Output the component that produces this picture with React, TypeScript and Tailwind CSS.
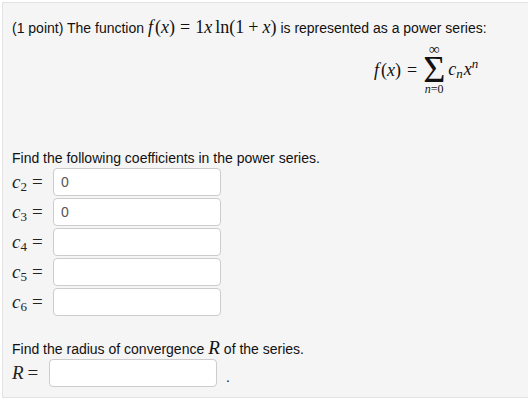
import React from "react";

const serif = { fontFamily: '"Liberation Serif", "DejaVu Serif", serif' };

function Coef({ n, value }: { n: number; value?: string }) {
  return (
    <div className="flex items-center h-[30px]">
      <div className="w-[41px] flex items-baseline text-[19px] text-[#222]" style={serif}>
        <span className="italic">c</span>
        <span className="text-[13px] translate-y-[3px]">{n}</span>
        <span className="ml-[5px]">=</span>
      </div>
      <div className="w-[168px] h-[28px] bg-white border border-[#cccccc] rounded-[4px] flex items-center pl-[7px] text-[14px] text-[#555]">
        {value}
      </div>
    </div>
  );
}

export default function App() {
  return (
    <div
      className="w-[528px] h-[400px] overflow-hidden bg-white pt-[2px] pl-[2px]"
      style={{ fontFamily: '"Liberation Sans", Arial, sans-serif' }}
    >
      <div className="w-[600px] h-[396px] bg-[#f5f5f5] border border-[#e3e3e3] pl-[9px] pt-[11px] text-[14px] text-[#111]">
        <div className="flex items-baseline h-[20px] whitespace-nowrap">
          <span>(1 point) The function</span>
          <span className="ml-[4px] text-[18px]" style={serif}>
            <span className="italic">f</span>
            <span className="ml-[2px]">(</span>
            <span className="italic">x</span>)
            <span className="mx-[5px]">=</span>1<span className="italic">x</span>
            <span className="ml-[3px]">ln(1</span>
            <span className="mx-[4px]">+</span>
            <span className="italic">x</span>)
          </span>
          <span className="ml-[4px]">is represented as a power series:</span>
        </div>

        <div className="pl-[362px] mt-[10px] flex items-center h-[52px] whitespace-nowrap" style={serif}>
          <span className="text-[18px] text-[#111]">
            <span className="italic">f</span>
            <span className="ml-[2px]">(</span>
            <span className="italic">x</span>)
            <span className="mx-[6px]">=</span>
          </span>
          <div className="flex flex-col items-center">
            <span className="text-[15px] leading-[11px]">∞</span>
            <span className="text-[38px] leading-[28px]">Σ</span>
            <span className="text-[12px] leading-[13px] italic">
              n<span className="not-italic">=0</span>
            </span>
          </div>
          <span className="text-[18px] ml-[3px] -mt-[2px]">
            <span className="italic">c</span>
            <span className="italic text-[13px] inline-block translate-y-[3px]">n</span>
            <span className="italic ml-[1px]">x</span>
            <span className="italic text-[13px] inline-block -translate-y-[7px]">n</span>
          </span>
        </div>

        <div className="mt-[53px] h-[18px] leading-[18px]">
          Find the following coefficients in the power series.
        </div>
        <div>
          <Coef n={2} value="0" />
          <Coef n={3} value="0" />
          <Coef n={4} />
          <Coef n={5} />
          <Coef n={6} />
        </div>

        <div className="mt-[22px] h-[18px] flex items-baseline leading-[18px] whitespace-nowrap">
          <span>Find the radius of convergence</span>
          <span className="italic text-[19px] mx-[4px]" style={serif}>R</span>
          <span>of the series.</span>
        </div>
        <div className="flex items-center mt-[1px] h-[30px]">
          <div className="w-[37px] text-[19px] text-[#222]" style={serif}>
            <span className="italic">R</span>
            <span className="ml-[4px]">=</span>
          </div>
          <div className="w-[168px] h-[28px] bg-white border border-[#cccccc] rounded-[4px]" />
          <span className="ml-[9px] mt-[8px] text-[14px]">.</span>
        </div>
      </div>
    </div>
  );
}
